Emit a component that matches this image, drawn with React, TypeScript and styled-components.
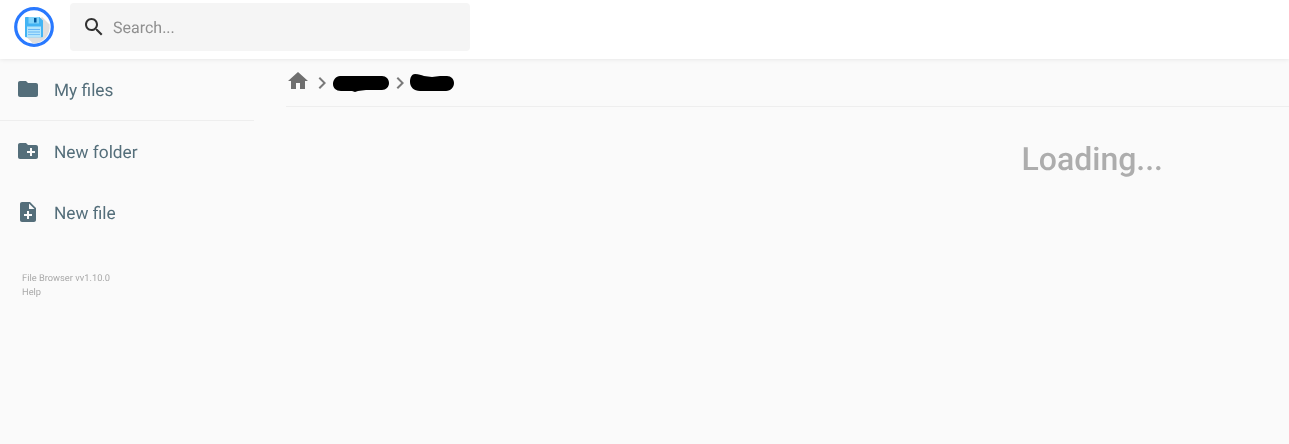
import React from "react";
import styled, { createGlobalStyle, css } from "styled-components";

const Global = createGlobalStyle`
  html, body { margin: 0; padding: 0; height: 100%; background: #fafafa; overflow: hidden; }
  body { font-family: Roboto, "Liberation Sans", sans-serif; text-rendering: geometricPrecision; }
`;
const softText = css`
  will-change: opacity;
`;
const Page = styled.div`
  width: 1289px;
  height: 444px;
  background: #fafafa;
  display: flex;
  flex-direction: column;
`;
const Header = styled.header`
  height: 59px;
  flex: none;
  background: #fff;
  box-shadow: 0 0 5px rgba(0, 0, 0, 0.1);
  display: flex;
  align-items: flex-start;
  position: relative;
  z-index: 1;
`;
const Logo = styled.svg`
  width: 40px;
  height: 40px;
  margin: 7px 16px 0 14px;
  flex: none;
`;
const SearchBox = styled.div`
  margin-top: 3px;
  width: 400px;
  height: 48px;
  background: #f5f5f5;
  border-radius: 4px;
  display: flex;
  align-items: center;
  padding-left: 12px;
  box-sizing: border-box;
`;
const SearchIcon = styled.svg`
  width: 24px;
  height: 24px;
  fill: #333;
  margin-right: 7px;
`;
const SearchText = styled.span`
  ${softText}
  font-size: 16px;
  color: #8f8f8f;
`;
const Body = styled.div`
  flex: 1;
  display: flex;
`;
const Sidebar = styled.nav`
  width: 254px;
  margin-right: 32px;
  flex: none;
  display: flex;
  flex-direction: column;
`;
const Item = styled.div`
  height: 61px;
  display: flex;
  align-items: center;
  padding-left: 16px;
`;
const ItemLabel = styled.span`
  ${softText}
  color: #546e7a;
  font-size: 17.3px;
  padding-top: 2px;
`;
const ItemIcon = styled.svg`
  width: 24px;
  height: 24px;
  fill: #546e7a;
  margin: -1px 14px 0 0;
`;
const Rule = styled.hr`
  border: 0;
  border-top: 1px solid #eeeeee;
  margin: 0;
`;
const Footer = styled.div`
  ${softText}
  margin: 29px 0 0 22px;
  font-size: 9.3px;
  line-height: 14px;
  color: #a9a9a9;
`;
const Main = styled.main`
  flex: 1;
  display: flex;
  flex-direction: column;
`;
const Crumbs = styled.div`
  height: 47px;
  border-bottom: 1px solid #eeeeee;
  display: flex;
  align-items: center;
`;
const HomeIcon = styled.svg`
  width: 24px;
  height: 24px;
  fill: #6f6f6f;
  margin-top: -3px;
`;
const Chevron = styled.svg`
  width: 24px;
  height: 24px;
  fill: #7a7a7a;
  margin-right: -1px;
`;
const Blob = styled.svg<{ $w: number; $gap: number }>`
  width: ${(p) => p.$w}px;
  height: 18px;
  margin-right: ${(p) => p.$gap}px;
  margin-left: ${(p) => (p.$gap === 0 ? -1 : 0)}px;
  fill: #000;
`;
const Loading = styled.h2`
  ${softText}
  margin: 33px 126px 0 0;
  text-align: right;
  font-size: 32px;
  line-height: 38px;
  font-weight: 500;
  color: #adadad;
`;

const Svg = (C: any, d: string) => (
  <C viewBox="0 0 24 24">
    <path d={d} />
  </C>
);
const chevron = "M10 6L8.59 7.41 13.17 12l-4.58 4.59L10 18l6-6z";

export default function App() {
  return (
    <Page>
      <Global />
      <Header>
        <Logo viewBox="0 0 40 40">
          <circle cx="20" cy="20" r="18.3" fill="#fff" stroke="#2979ff" strokeWidth="3.2" />
          <path d="M28 10 L35.5 17.5 A16.7 16.7 0 0 1 19 36.6 L10.5 28 Z" fill="#dedede" />
          <path d="M12 10h13.5l3.5 3.5v16a.8.8 0 0 1-.8.8H11.8a.8.8 0 0 1-.8-.8V10.8a.8.8 0 0 1 .8-.8z" fill="#42b4f4" />
          <rect x="14.5" y="10" width="10.5" height="6.5" fill="#81d4fa" />
          <rect x="20" y="11" width="2.5" height="4.5" fill="#01579b" />
          <rect x="13" y="19.5" width="14" height="10.8" fill="#b3e5fc" />
          <path d="M14 22h12v.9H14zM14 24.6h12v.9H14zM14 27.2h12v.9H14z" fill="#64b5f6" />
        </Logo>
        <SearchBox>
          {Svg(SearchIcon, "M15.5 14h-.79l-.28-.27C15.41 12.59 16 11.11 16 9.5 16 5.91 13.09 3 9.5 3S3 5.91 3 9.5 5.91 16 9.5 16c1.61 0 3.09-.59 4.23-1.57l.27.28v.79l5 4.99L20.49 19l-4.99-5zm-6 0C7.01 14 5 11.99 5 9.5S7.01 5 9.5 5 14 7.01 14 9.5 11.99 14 9.5 14z")}
          <SearchText>Search...</SearchText>
        </SearchBox>
      </Header>
      <Body>
        <Sidebar>
          <Item>
            {Svg(ItemIcon, "M10 4H4c-1.1 0-1.99.9-1.99 2L2 18c0 1.1.9 2 2 2h16c1.1 0 2-.9 2-2V8c0-1.1-.9-2-2-2h-8l-2-2z")}
            <ItemLabel>My files</ItemLabel>
          </Item>
          <Rule />
          <Item>
            {Svg(ItemIcon, "M20 6h-8l-2-2H4c-1.11 0-1.99.89-1.99 2L2 18c0 1.11.89 2 2 2h16c1.11 0 2-.89 2-2V8c0-1.11-.89-2-2-2zm-1 8h-3v3h-2v-3h-3v-2h3V9h2v3h3v2z")}
            <ItemLabel>New folder</ItemLabel>
          </Item>
          <Item>
            {Svg(ItemIcon, "M14 2H6c-1.1 0-1.99.9-1.99 2L4 20c0 1.1.89 2 1.99 2H18c1.1 0 2-.9 2-2V8l-6-6zm2 14h-3v3h-2v-3H8v-2h3v-3h2v3h3v2zm-3-7V3.5L18.5 9H13z")}
            <ItemLabel>New file</ItemLabel>
          </Item>
          <Footer>
            File Browser vv1.10.0
            <br />
            Help
          </Footer>
        </Sidebar>
        <Main>
          <Crumbs>
            {Svg(HomeIcon, "M10 20v-6h4v6h5v-8h3L12 3 2 12h3v8z")}
            {Svg(Chevron, chevron)}
            <Blob $w={56} $gap={-1} viewBox="0 0 56 18">
              <path d="M7 2h42c4 0 7 3 7 7s-3 7-7 7l-16 0-8 1-3 1-3-1H8c-5 0-8-3-8-7s3-8 7-8z" />
            </Blob>
            {Svg(Chevron, chevron)}
            <Blob $w={44} $gap={0} viewBox="0 0 44 18">
              <path d="M5 0c4 0 6 1 9 2l8 1 8-1h7c4 0 7 3 7 7s-3 8-8 8H10C4 17 0 13 0 8s2-8 5-8z" />
            </Blob>
          </Crumbs>
          <Loading>Loading...</Loading>
        </Main>
      </Body>
    </Page>
  );
}
